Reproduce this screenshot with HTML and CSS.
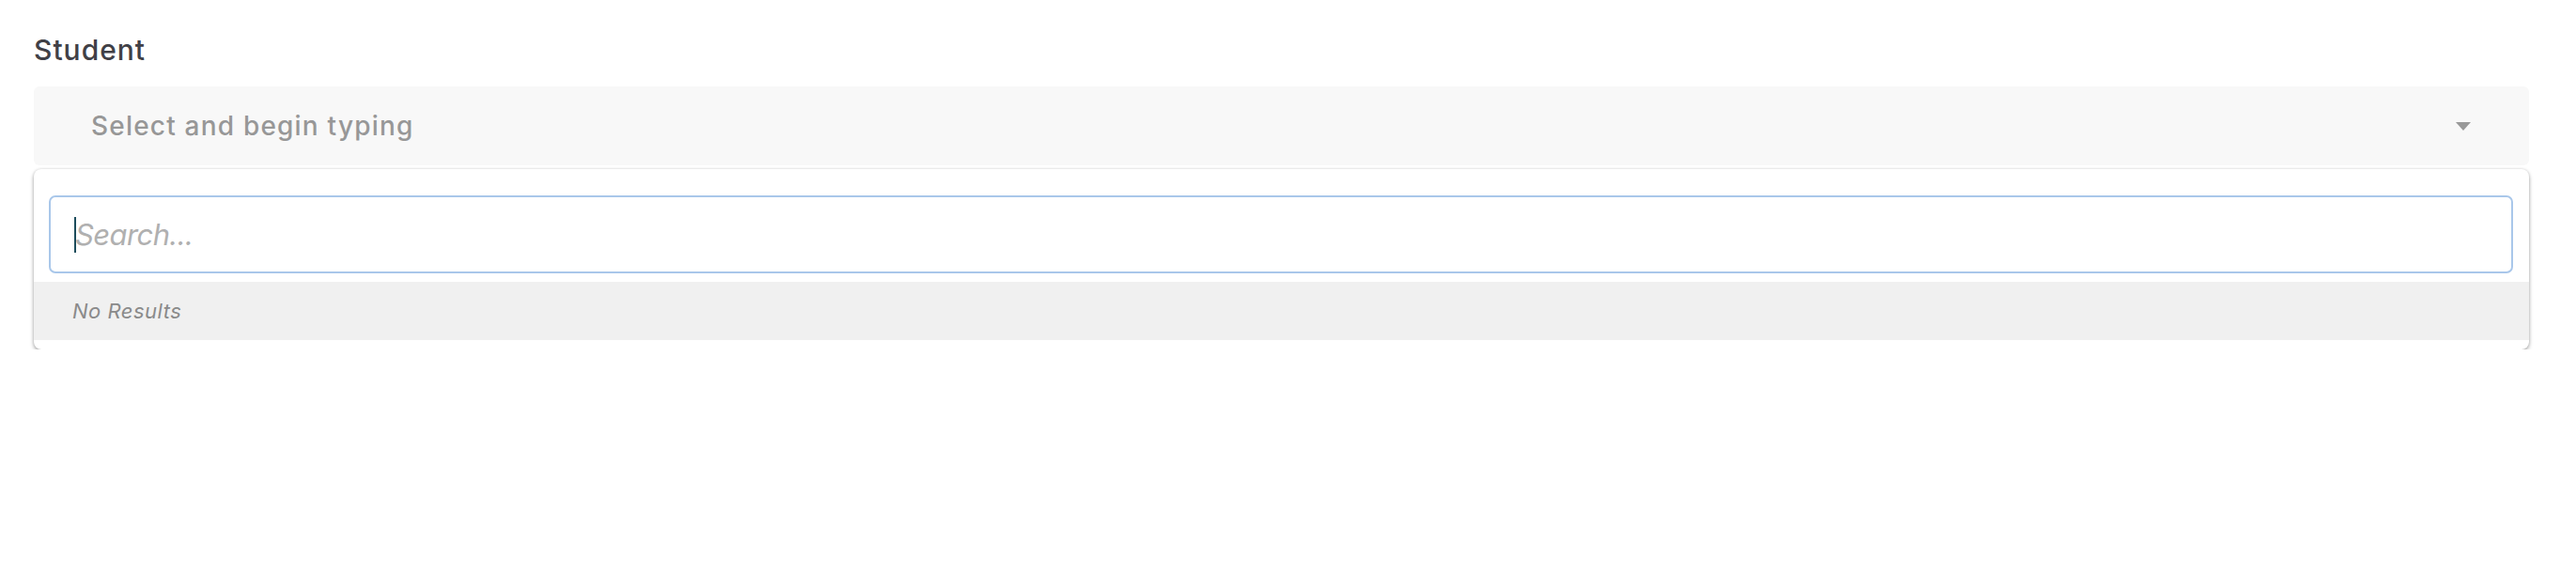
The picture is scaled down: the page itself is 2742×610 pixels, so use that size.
FILE: index.html
```html
<!DOCTYPE html>
<html lang="en">
<head>
    <meta charset="UTF-8">
    <meta name="viewport" content="width=device-width, initial-scale=1.0">
    <title>Student</title>
    <link rel="stylesheet" href="styles.css">
</head>
<body>
    <div class="field">
        <label class="field-label" for="studentSearch">Student</label>
        <div class="select">
            <span class="select-text">Select and begin typing</span>
            <span class="select-arrow"></span>
        </div>
        <div class="dropdown">
            <div class="search-wrap">
                <input type="text" id="studentSearch" class="search" placeholder="Search...">
                <span class="caret"></span>
            </div>
            <div class="no-results">No Results</div>
        </div>
    </div>
</body>
</html>
```

FILE: styles.css
```css
body, html {
    margin: 0;
    padding: 0;
    background: #fff;
    font-family: Inter, "Noto Sans", sans-serif;
}

.field {
    display: flex;
    flex-direction: column;
    margin: 35px 50px 0 36px;
}

.field-label {
    font-size: 30px;
    line-height: 36px;
    font-weight: 500;
    color: #404046;
    letter-spacing: 1px;
    margin-bottom: 21px;
}

.select {
    height: 84px;
    background: #f8f8f8;
    border-radius: 6px;
    display: flex;
    align-items: center;
    justify-content: space-between;
    padding: 0 62px 0 61px;
}

.select-text {
    font-size: 28px;
    font-weight: 500;
    color: #979797;
    letter-spacing: 1.2px;
}

.select-arrow {
    width: 0;
    height: 0;
    border-left: 8.5px solid transparent;
    border-right: 8.5px solid transparent;
    border-top: 9px solid #999;
}

.dropdown {
    margin-top: 4px;
    background: #fff;
    border-radius: 8px;
    box-shadow: 0 2px 4px rgba(0, 0, 0, 0.35), 0 0 3px rgba(0, 0, 0, 0.1);
    padding: 28px 0 10px 0;
}

.search-wrap {
    position: relative;
    margin: 0 17px 9px 16px;
}

.search {
    display: block;
    width: 100%;
    box-sizing: border-box;
    height: 83px;
    border: 2px solid #a9c7ea;
    border-radius: 7px;
    padding: 0 0 0 26px;
    font-family: Inter, "Noto Sans", sans-serif;
    font-size: 31px;
    font-style: italic;
    letter-spacing: -0.6px;
    color: #333;
    outline: none;
    background: #fff;
}

.search::placeholder {
    color: #b0b0b0;
    font-style: italic;
}

.caret {
    position: absolute;
    left: 27px;
    top: 23px;
    width: 2px;
    height: 38px;
    background: #1d4d5c;
}

.no-results {
    height: 62px;
    background: #f0f0f0;
    display: flex;
    align-items: center;
    padding-left: 41px;
    font-size: 22px;
    font-style: italic;
    color: #8a8a8a;
    letter-spacing: 0.5px;
}
```
